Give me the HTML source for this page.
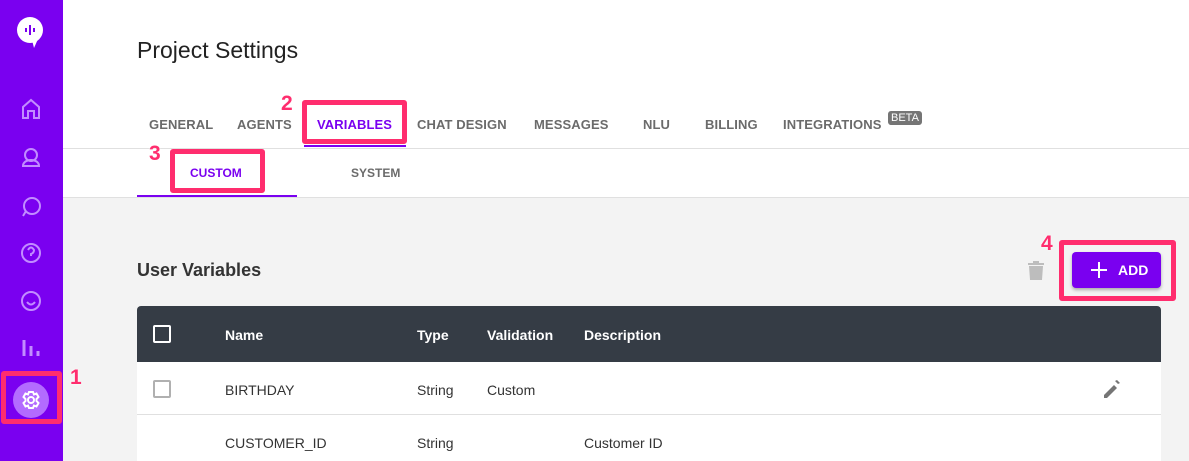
<!DOCTYPE html><html><head><style>
*{box-sizing:border-box;margin:0;padding:0}
body{width:1189px;height:461px;overflow:hidden;font-family:"Liberation Sans",sans-serif;background:#f3f3f3;position:relative}
.a{position:absolute}
.sb{left:0;top:0;width:63px;height:461px;background:#7a00f0}
.tab{position:absolute;top:117px;font-size:13px;color:#6b6b6b;font-weight:bold;letter-spacing:0.1px}
.hl{position:absolute;border:5px solid #ff2d6e;border-radius:3px}
.num{position:absolute;color:#ff2d6e;font-weight:bold;font-size:21px;text-shadow:0 0 2px #fff}
.th{position:absolute;top:327px;color:#fff;font-weight:bold;font-size:14px}
.td{position:absolute;font-size:14px;color:#333}
</style></head><body>
<div class="a" style="left:63px;top:0;width:1126px;height:149px;background:#fff;border-bottom:1px solid #e0e0e0"></div>
<div class="a" style="left:63px;top:149px;width:1126px;height:49px;background:#fff;border-bottom:1px solid #e0e0e0"></div>
<div class="a sb"></div>
<svg class="a" style="left:15px;top:16px" width="30" height="32" viewBox="0 0 30 32"><circle cx="15" cy="14" r="13" fill="#fff"/><path d="M17 24 L19 32 L23 23Z" fill="#fff"/><rect x="10" y="12" width="2" height="4" fill="#7a00f0"/><rect x="14" y="9" width="2" height="10" fill="#7a00f0"/><rect x="18" y="12" width="2" height="4" fill="#7a00f0"/></svg>
<svg class="a" style="left:20px;top:98px" width="22" height="300" viewBox="0 0 22 300" fill="none" stroke="#c28cff" stroke-width="2">
<path d="M3 20 V9 L11 2 L19 9 V20 H14 V13 H8 V20Z"/>
<circle cx="11" cy="57" r="6"/><path d="M3 68 C3 60 19 60 19 68 Z"/>
<circle cx="12" cy="108" r="8"/><path d="M3 118 L6 113"/>
<circle cx="11" cy="155" r="9"/><path d="M8 152 Q11 147 14 152 Q14 155 11 156 V158"/>
<circle cx="11" cy="203" r="9"/><path d="M7 204 Q11 209 15 204"/>
<path d="M4 242 V258 M11 248 V258 M18 253 V258" stroke-width="3"/>
</svg>
<div class="a" style="left:13px;top:382px;width:36px;height:36px;border-radius:50%;background:#b36bff"></div>
<svg class="a" style="left:21px;top:390px" width="20" height="20" viewBox="0 0 20 20" fill="none" stroke="#fff" stroke-width="2"><circle cx="10" cy="10" r="3"/><path d="M8 2h4l1 2.5 2.5-1 2 3.5-2 2v2l2 2-2 3.5-2.5-1-1 2.5H8l-1-2.5-2.5 1-2-3.5 2-2v-2l-2-2 2-3.5 2.5 1z"/></svg>
<div class="hl" style="left:1px;top:371px;width:61px;height:53px"></div>
<div class="num" style="left:70px;top:366px">1</div>
<div class="a" style="left:137px;top:37px;font-size:23px;color:#222">Project Settings</div>
<div class="tab" style="left:149px">GENERAL</div>
<div class="tab" style="left:237px">AGENTS</div>
<div class="tab" style="left:317px;color:#7a00f0">VARIABLES</div>
<div class="tab" style="left:417px">CHAT DESIGN</div>
<div class="tab" style="left:534px">MESSAGES</div>
<div class="tab" style="left:643px">NLU</div>
<div class="tab" style="left:705px">BILLING</div>
<div class="tab" style="left:783px">INTEGRATIONS</div>
<div class="a" style="left:888px;top:111px;background:#757575;color:#fff;font-size:11px;padding:1px 3px;border-radius:3px">BETA</div>
<div class="a" style="left:304px;top:145px;width:102px;height:2px;background:#7a00f0"></div>
<div class="hl" style="left:302px;top:100px;width:105px;height:44px"></div>
<div class="num" style="left:281px;top:92px">2</div>
<div class="a" style="left:190px;top:166px;font-size:12px;font-weight:bold;color:#7a00f0">CUSTOM</div>
<div class="a" style="left:351px;top:166px;font-size:12px;font-weight:bold;color:#6b6b6b">SYSTEM</div>
<div class="a" style="left:137px;top:195px;width:160px;height:2px;background:#7a00f0"></div>
<div class="hl" style="left:170px;top:149px;width:95px;height:44px"></div>
<div class="num" style="left:149px;top:142px">3</div>
<div class="a" style="left:137px;top:260px;font-size:18px;font-weight:bold;color:#333">User Variables</div>
<svg class="a" style="left:1028px;top:261px" width="16" height="19" viewBox="0 0 16 19" fill="#bdbdbd"><rect x="0" y="2" width="16" height="2"/><rect x="5" y="0" width="6" height="2"/><path d="M1 5h14l-1 14H2z"/></svg>
<div class="a" style="left:1072px;top:252px;width:89px;height:36px;background:#7a00f0;border-radius:4px;box-shadow:0 2px 3px rgba(0,0,0,.3);color:#fff;font-weight:bold;font-size:14px;line-height:36px;padding-left:46px">ADD</div>
<div class="a" style="left:1091px;top:269px;width:16px;height:2px;background:#fff"></div>
<div class="a" style="left:1098px;top:262px;width:2px;height:16px;background:#fff"></div>
<div class="hl" style="left:1059px;top:240px;width:117px;height:61px"></div>
<div class="num" style="left:1041px;top:232px">4</div>
<div class="a" style="left:137px;top:306px;width:1024px;height:155px;background:#fff;border-radius:4px 4px 0 0;overflow:hidden">
<div style="height:56px;background:#353c45"></div>
<div style="height:53px;border-bottom:1px solid #e0e0e0"></div>
</div>
<div class="a" style="left:153px;top:325px;width:18px;height:18px;border:2px solid #fff;border-radius:2px"></div>
<div class="th" style="left:225px">Name</div>
<div class="th" style="left:417px">Type</div>
<div class="th" style="left:487px">Validation</div>
<div class="th" style="left:584px">Description</div>
<div class="a" style="left:153px;top:380px;width:18px;height:18px;border:2px solid #b0b0b0;border-radius:2px"></div>
<div class="td" style="left:225px;top:382px">BIRTHDAY</div>
<div class="td" style="left:417px;top:382px">String</div>
<div class="td" style="left:487px;top:382px">Custom</div>
<svg class="a" style="left:1104px;top:380px" width="18" height="18" viewBox="0 0 18 18" fill="#757575"><path d="M0 15v3h3l10-10-3-3zM14 4l-3-3 2-1 3 3z"/></svg>
<div class="td" style="left:225px;top:435px">CUSTOMER_ID</div>
<div class="td" style="left:417px;top:435px">String</div>
<div class="td" style="left:584px;top:435px">Customer ID</div>
</body></html>
